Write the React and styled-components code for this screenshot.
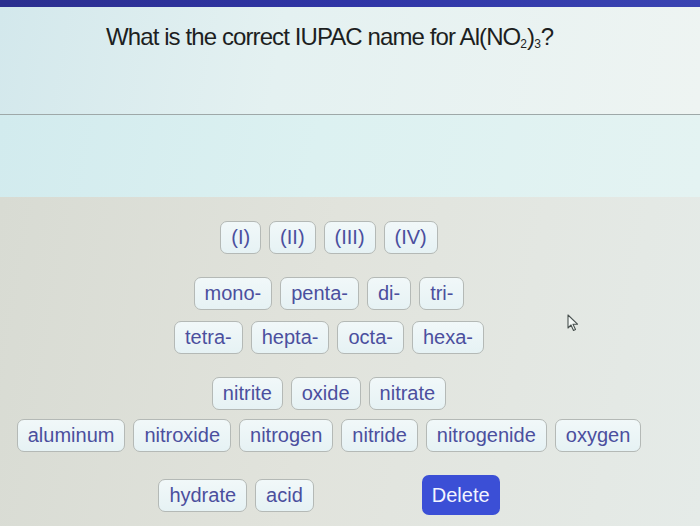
import React from 'react';
import styled, { createGlobalStyle } from 'styled-components';

const GlobalStyle = createGlobalStyle`
  html, body {
    margin: 0;
    padding: 0;
    background: #e2e5de;
  }
  body {
    font-family: "Liberation Sans", Arial, sans-serif;
  }
`;

const romanTiles = ['(I)', '(II)', '(III)', '(IV)'];
const prefixRows = [
  ['mono-', 'penta-', 'di-', 'tri-'],
  ['tetra-', 'hepta-', 'octa-', 'hexa-'],
];
const wordRows = [
  ['nitrite', 'oxide', 'nitrate'],
  ['aluminum', 'nitroxide', 'nitrogen', 'nitride', 'nitrogenide', 'oxygen'],
];
const suffixTiles = ['hydrate', 'acid'];

export default function App() {
  return (
    <>
      <GlobalStyle />
      <Screen>
        <TopBar />
        <QuestionPanel>
          <Question>
            What is the correct IUPAC name for Al(NO<Sub>2</Sub>)<Sub>3</Sub>?
          </Question>
        </QuestionPanel>
        <AnswerArea />
        <Bank>
          <Group>
            <Row>
              {romanTiles.map((t) => (
                <Tile key={t}>{t}</Tile>
              ))}
            </Row>
          </Group>

          <Group $rowGap={11}>
            {prefixRows.map((row, i) => (
              <Row key={i}>
                {row.map((t) => (
                  <Tile key={t}>{t}</Tile>
                ))}
              </Row>
            ))}
          </Group>

          <Group $rowGap={9}>
            {wordRows.map((row, i) => (
              <Row key={i}>
                {row.map((t) => (
                  <Tile key={t}>{t}</Tile>
                ))}
              </Row>
            ))}
          </Group>

          <Group>
            <Row>
              {suffixTiles.map((t) => (
                <Tile key={t}>{t}</Tile>
              ))}
              <DeleteButton>Delete</DeleteButton>
            </Row>
          </Group>

          <Cursor width="12" height="18" viewBox="0 0 12 18">
            <path
              d="M1 1 L1 14 L4 11 L6.5 16.5 L8.5 15.6 L6 10.2 L10.5 10.2 Z"
              fill="#f4f8f6"
              stroke="#4a5250"
              strokeWidth="1.1"
              strokeLinejoin="round"
            />
          </Cursor>
        </Bank>
      </Screen>
    </>
  );
}

const Screen = styled.div`
  width: 700px;
  height: 526px;
  display: flex;
  flex-direction: column;
  overflow: hidden;
`;

const TopBar = styled.div`
  height: 7px;
  flex-shrink: 0;
  background: linear-gradient(90deg, #2b2f8f, #2f35a6 50%, #3a44b2);
`;

const QuestionPanel = styled.div`
  height: 108px;
  flex-shrink: 0;
  box-sizing: border-box;
  padding: 16px 0 0 106px;
  background: linear-gradient(100deg, #d3e8ec 0%, #e4f1f1 40%, #eef4f2 100%);
  border-bottom: 1px solid #9ea8a8;
`;

const Question = styled.div`
  font-size: 24px;
  line-height: 28px;
  letter-spacing: -0.9px;
  color: #1d1f1f;
`;

const Sub = styled.span`
  font-size: 12px;
  letter-spacing: 0;
  position: relative;
  top: 3px;
`;

const AnswerArea = styled.div`
  height: 82px;
  flex-shrink: 0;
  background: linear-gradient(100deg, #d2ebee 0%, #dcf1f1 45%, #e4f3f2 100%);
`;

const Bank = styled.div`
  position: relative;
  flex: 1;
  display: flex;
  flex-direction: column;
  gap: 23px;
  padding: 24px 42px 0 0;
  background: linear-gradient(100deg, #d8dbd3 0%, #e1e3dc 45%, #e5ebe8 100%);
`;

const Group = styled.div`
  display: flex;
  flex-direction: column;
  gap: ${(p) => p.$rowGap || 0}px;
`;

const Row = styled.div`
  display: flex;
  justify-content: center;
  align-items: center;
  gap: 8px;
`;

const Tile = styled.div`
  height: 33px;
  box-sizing: border-box;
  padding: 0 10px;
  display: flex;
  align-items: center;
  border: 1px solid #b4b9b6;
  border-radius: 7px;
  background: linear-gradient(180deg, #f1f8f9, #e6f2f4);
  color: #4b4f9e;
  font-size: 20px;
  white-space: nowrap;
`;

const DeleteButton = styled.button`
  height: 40px;
  margin-left: 100px;
  padding: 0 10px;
  border: none;
  border-radius: 7px;
  background: #3b4fd6;
  color: #f2f4ff;
  font-family: "Liberation Sans", Arial, sans-serif;
  font-size: 20px;
`;

const Cursor = styled.svg`
  position: absolute;
  left: 567px;
  top: 117px;
`;
